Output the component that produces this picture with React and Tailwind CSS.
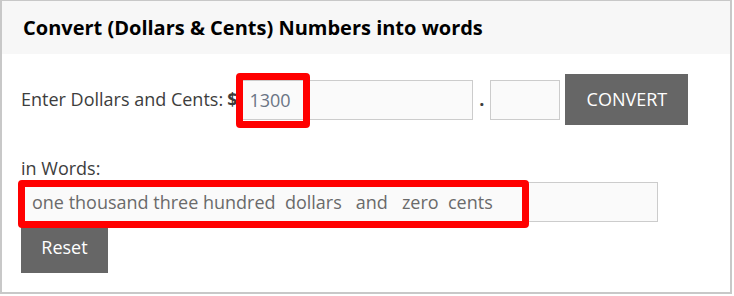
import React from 'react';

function App() {
  return (
    <div className="w-[734px] h-[296px] bg-white" style={{ fontFamily: '"Open Sans", "Noto Sans", sans-serif' }}>
      <div className="w-[732px] h-[294px] border-2 border-t border-[#c8c8c8] flex flex-col">
        {/* Header */}
        <div className="h-[53px] shrink-0 bg-[#f7f7f7] flex items-center pl-[21px]">
          <h2 className="text-[20px] font-bold text-black leading-none">Convert (Dollars &amp; Cents) Numbers into words</h2>
        </div>

        {/* Body */}
        <div className="px-[19px] pt-[20px]">
          <div className="flex items-center h-[51px]">
            <span className="text-[18px] text-[#3d3d3d] whitespace-nowrap">Enter Dollars and Cents:</span>
            <span className="text-[18px] font-bold text-[#3d3d3d] ml-[4px]">$</span>
            <div className="relative ml-[4px] shrink-0">
              <input
                type="text"
                defaultValue="1300"
                className="block w-[232px] h-[40px] bg-[#fafafa] border border-[#cccccc] pl-[7px] text-[18px] text-[#6a7585] outline-none"
              />
              <div className="absolute left-[-5px] top-[-7px] w-[74px] h-[55px] border-[7px] border-[#ff0000] rounded-[4px] pointer-events-none" />
            </div>
            <span className="w-[17px] text-center text-[18px] font-bold text-[#3d3d3d]">.</span>
            <input
              type="text"
              className="block shrink-0 w-[70px] h-[40px] bg-[#fafafa] border border-[#cccccc] outline-none"
            />
            <button className="ml-[5px] shrink-0 w-[123px] h-[51px] bg-[#666666] text-white text-[18px]">CONVERT</button>
          </div>

          <div className="mt-[31px] text-[18px] text-[#3d3d3d] leading-[24px]">in Words:</div>
          <div className="relative mt-[2px] w-[637px]">
            <input
              type="text"
              defaultValue="one thousand three hundred  dollars   and   zero  cents"
              className="block w-[637px] h-[40px] bg-[#fafafa] border border-[#cccccc] pl-[10px] text-[18px] text-[#6a6a6a] outline-none"
            />
            <div className="absolute left-[-3px] top-[-2px] w-[511px] h-[48px] border-[7px] border-[#ff0000] rounded-[4px] pointer-events-none" />
          </div>
          <button className="block w-[87px] h-[51px] bg-[#666666] text-white text-[18px]">Reset</button>
        </div>
      </div>
    </div>
  );
}

export default App;
